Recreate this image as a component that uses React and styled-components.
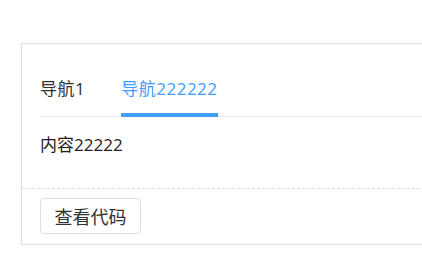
import React, { useState } from 'react';
import styled, { createGlobalStyle } from 'styled-components';

const GlobalStyle = createGlobalStyle`
  html, body {
    margin: 0;
    padding: 0;
    background: #fff;
    overflow: hidden;
  }
  body {
    font-family: "Open Sans", "Noto Sans CJK SC", sans-serif;
    color: #303133;
  }
`;

const Page = styled.div`
  padding: 43px 0 0 21px;
`;

const Card = styled.div`
  width: 600px;
  border: 1px solid #dcdfe6;
  box-sizing: border-box;
`;

const Demo = styled.div`
  padding: 21px 18px 31px;
`;

const TabNav = styled.div`
  display: flex;
  border-bottom: 1px solid #e4e7ed;
`;

const TabItem = styled.div`
  position: relative;
  padding: 12px 0 15px;
  margin-right: 36px;
  font-size: 17px;
  line-height: 24px;
  letter-spacing: 0.5px;
  cursor: pointer;
  color: ${(p) => (p.$active ? '#409eff' : '#303133')};

  &::after {
    content: '';
    position: absolute;
    left: 0;
    right: 0;
    bottom: -1px;
    height: 4px;
    background: ${(p) => (p.$active ? '#409eff' : 'transparent')};
  }
`;

const Content = styled.div`
  margin-top: 16px;
  font-size: 17px;
  line-height: 24px;
  color: #1f2020;
`;

const Footer = styled.div`
  border-top: 1px dashed #dcdfe6;
  padding: 9px 18px 10px;
`;

const Button = styled.button`
  height: 36px;
  width: 101px;
  padding: 0;
  border: 1px solid #dcdfe6;
  border-radius: 4px;
  background: #fff;
  font-family: inherit;
  font-size: 18px;
  color: #303133;
  cursor: pointer;
`;

const tabs = [
  { key: '1', label: '导航1', content: '内容11111' },
  { key: '2', label: '导航222222', content: '内容22222' },
];

export default function App() {
  const [active, setActive] = useState('2');
  const current = tabs.find((t) => t.key === active);

  return (
    <>
      <GlobalStyle />
      <Page>
        <Card>
          <Demo>
            <TabNav>
              {tabs.map((t) => (
                <TabItem key={t.key} $active={t.key === active} onClick={() => setActive(t.key)}>
                  {t.label}
                </TabItem>
              ))}
            </TabNav>
            <Content>{current.content}</Content>
          </Demo>
          <Footer>
            <Button>查看代码</Button>
          </Footer>
        </Card>
      </Page>
    </>
  );
}
